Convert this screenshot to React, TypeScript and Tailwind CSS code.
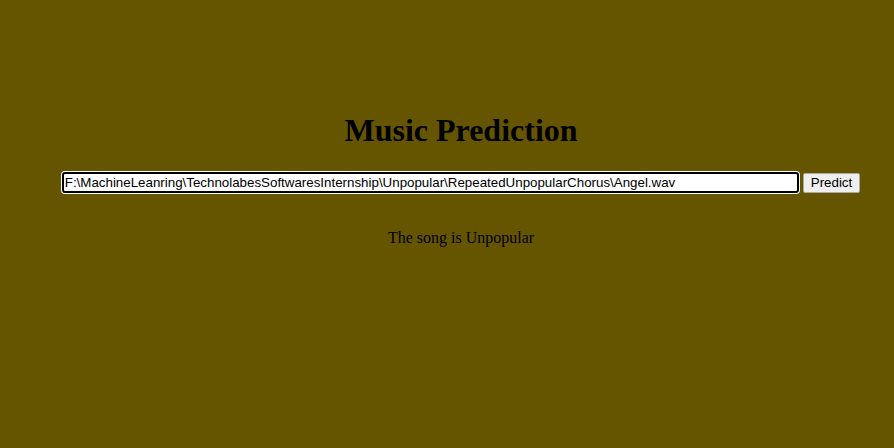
export default function App() {
  return (
    <div className="min-h-[448px] w-full bg-[#665500] text-black">
      <div className="flex flex-col items-center pl-[28px] pt-[112px]">
        <h1 className="text-[32px] font-bold leading-[36px] [font-family:'Liberation_Serif',serif]">
          Music Prediction
        </h1>
        <form className="mt-[24px] flex items-center gap-[4px]" onSubmit={(e) => e.preventDefault()}>
          <input
            type="text"
            defaultValue="F:\MachineLeanring\TechnolabesSoftwaresInternship\Unpopular\RepeatedUnpopularChorus\Angel.wav"
            className="h-[21px] w-[737px] rounded-[3px] border-2 border-black bg-white px-[1px] text-[13.333px] text-black outline-none ring-1 ring-white [font-family:'Liberation_Sans',Arial,sans-serif]"
          />
          <button
            type="submit"
            className="h-[20px] rounded-[2px] border border-[#a9a9a9] bg-[#efefef] px-[7px] pt-[1px] text-[13.333px] leading-none text-black [font-family:'Liberation_Sans',Arial,sans-serif]"
          >
            Predict
          </button>
        </form>
        <p className="mt-[36px] text-[16px] leading-[18px] [font-family:'Liberation_Serif',serif]">
          The song is Unpopular
        </p>
      </div>
    </div>
  )
}
